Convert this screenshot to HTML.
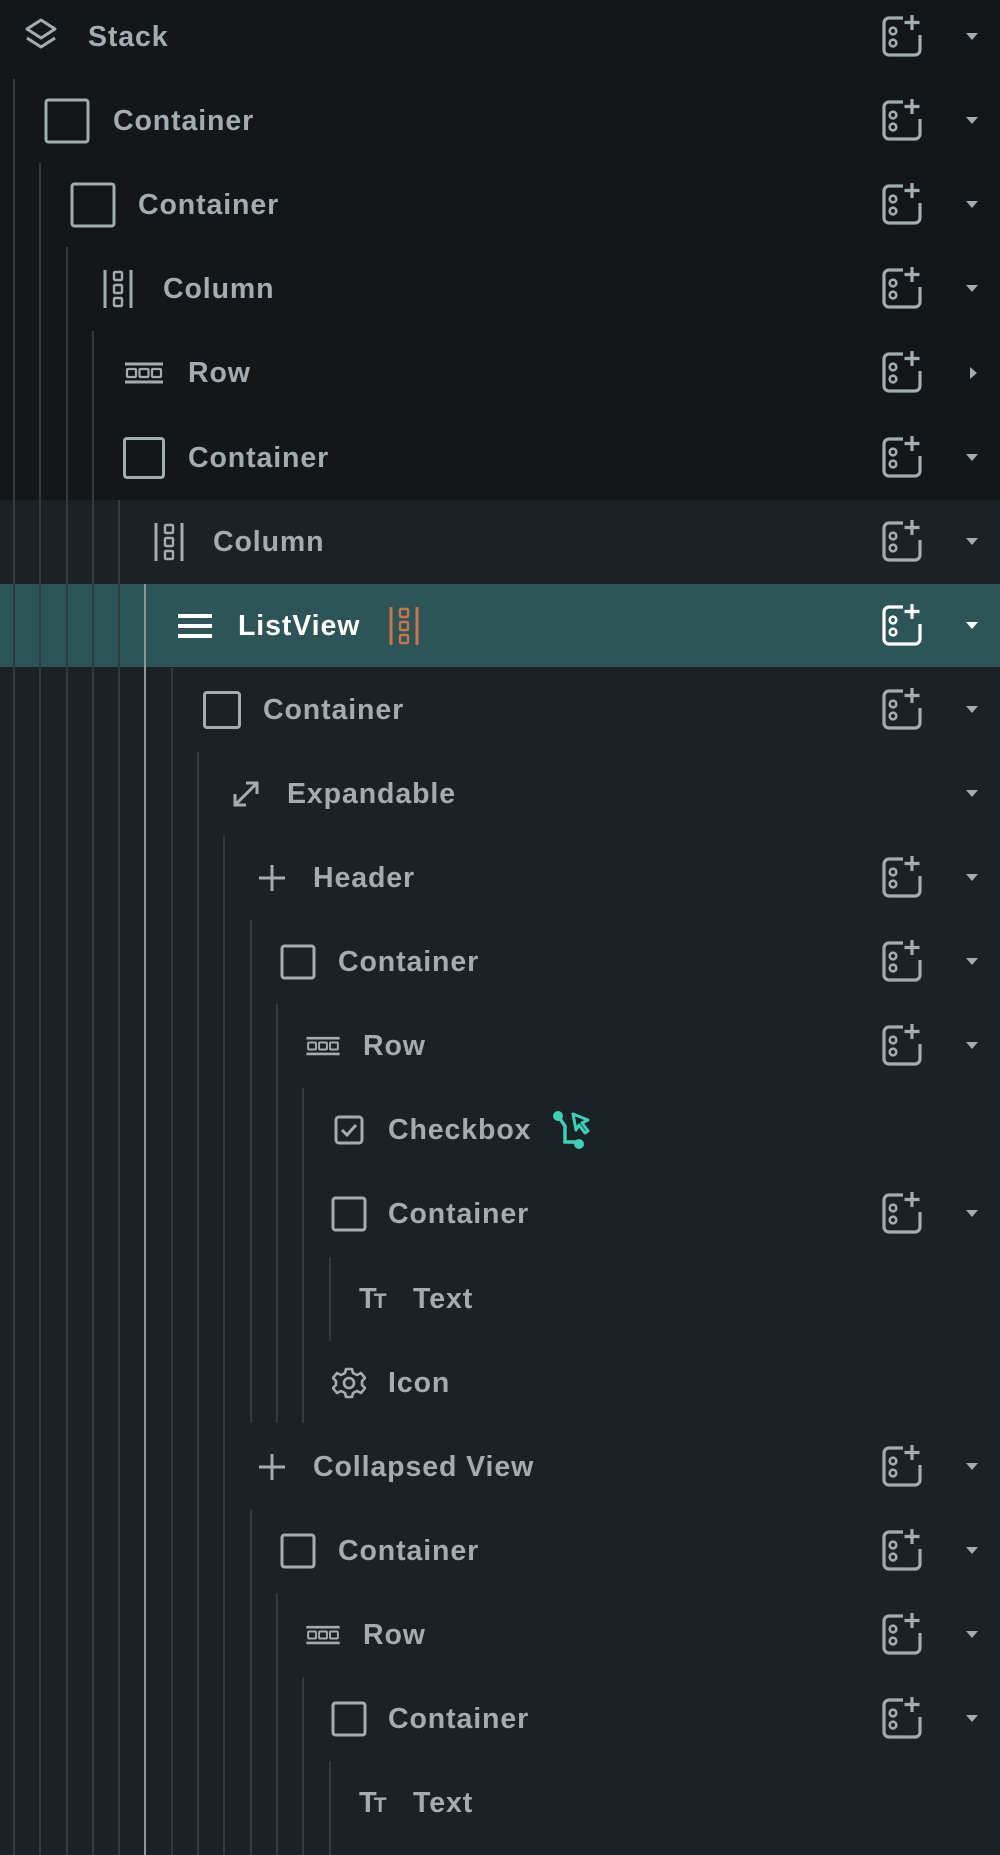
<!DOCTYPE html>
<html><head><meta charset="utf-8"><style>
*{margin:0;padding:0;box-sizing:border-box}
body{width:1000px;height:1855px;overflow:hidden;background:#1b2226;position:relative;font-family:"Liberation Sans",sans-serif}
.top{position:absolute;left:0;top:0;width:1000px;height:500px;background:#131719}
.hl{position:absolute;left:0;top:584px;width:1000px;height:83px;background:#2d5456}
.ln{position:absolute;width:2px;background:#323b3f}
.r{position:absolute;left:0;width:1000px;height:84px}
.t{position:absolute;top:0;line-height:84px;font-size:28.5px;font-weight:bold;color:#a3acb0;letter-spacing:0.9px;white-space:nowrap}
.i{position:absolute;top:50%;transform:translate(-50%,-50%)}
.a{position:absolute;left:880px;top:19px}
.ar{position:absolute;left:966px;top:38px}
</style></head><body>
<div class="top"></div>
<div class="hl"></div>
<svg width="0" height="0" style="position:absolute"><defs>
<g id="add"><path d="M23 4H9a5 5 0 0 0-5 5v27a5 5 0 0 0 5 5h26a5 5 0 0 0 5-5V21" fill="none" stroke="currentColor" stroke-width="3.2"/><path d="M32 1v15M24.5 8.5h15" stroke="currentColor" stroke-width="3.2"/><circle cx="13" cy="17" r="3.3" fill="none" stroke="currentColor" stroke-width="2.6"/><circle cx="13" cy="29" r="3.3" fill="none" stroke="currentColor" stroke-width="2.6"/></g>
<g id="arr"><path d="M0 0h12L6 7z" fill="currentColor"/></g>
<g id="col"><path d="M3 1v38M29 1v38" stroke="currentColor" stroke-width="3"/><rect x="12" y="3" width="8" height="8" rx="1" fill="none" stroke="currentColor" stroke-width="2.4"/><rect x="12" y="16" width="8" height="8" rx="1" fill="none" stroke="currentColor" stroke-width="2.4"/><rect x="12" y="29" width="8" height="8" rx="1" fill="none" stroke="currentColor" stroke-width="2.4"/></g>
<g id="row"><path d="M1 3h38M1 21h38" stroke="currentColor" stroke-width="3"/><rect x="3" y="8" width="9" height="8" rx="1" fill="none" stroke="currentColor" stroke-width="2.2"/><rect x="15.5" y="8" width="9" height="8" rx="1" fill="none" stroke="currentColor" stroke-width="2.2"/><rect x="28" y="8" width="9" height="8" rx="1" fill="none" stroke="currentColor" stroke-width="2.2"/></g>
</defs></svg>

<div class="ln" style="left:13px;top:79px;height:1776px"></div>
<div class="ln" style="left:39px;top:163px;height:1692px"></div>
<div class="ln" style="left:66px;top:247px;height:1608px"></div>
<div class="ln" style="left:92px;top:331px;height:1524px"></div>
<div class="ln" style="left:118px;top:500px;height:1355px"></div>
<div class="ln" style="left:144px;top:584px;height:1271px;background:#8c979b"></div>
<div class="ln" style="left:171px;top:668px;height:1187px"></div>
<div class="ln" style="left:197px;top:752px;height:1103px"></div>
<div class="ln" style="left:223px;top:836px;height:1019px"></div>
<div class="ln" style="left:250px;top:920px;height:503px"></div>
<div class="ln" style="left:250px;top:1509px;height:346px"></div>
<div class="ln" style="left:276px;top:1004px;height:419px"></div>
<div class="ln" style="left:276px;top:1593px;height:262px"></div>
<div class="ln" style="left:302px;top:1088px;height:335px"></div>
<div class="ln" style="left:302px;top:1677px;height:178px"></div>
<div class="ln" style="left:329px;top:1257px;height:84px"></div>
<div class="ln" style="left:329px;top:1761px;height:94px"></div>

<div class="r" style="top:-5px;color:#a3acb0">
<svg class="i" style="left:41px" width="40" height="42" viewBox="0 0 40 42"><path d="M20 4L34 13L20 22L6 13Z" fill="none" stroke="currentColor" stroke-width="3" stroke-linejoin="round"/><path d="M6 22L20 31L34 22" fill="none" stroke="currentColor" stroke-width="3" stroke-linejoin="round"/></svg>
<div class="t" style="left:88px">Stack</div>
<svg class="a" width="44" height="44"><use href="#add"/></svg><svg class="ar" width="12" height="8"><use href="#arr"/></svg></div>

<div class="r" style="top:79px;color:#a3acb0">
<div class="i" style="left:67px;width:45px;height:45px;border:3px solid #a3acb0;border-radius:4px"></div>
<div class="t" style="left:113px">Container</div>
<svg class="a" width="44" height="44"><use href="#add"/></svg><svg class="ar" width="12" height="8"><use href="#arr"/></svg></div>

<div class="r" style="top:163px;color:#a3acb0">
<div class="i" style="left:93px;width:45px;height:45px;border:3px solid #a3acb0;border-radius:4px"></div>
<div class="t" style="left:138px">Container</div>
<svg class="a" width="44" height="44"><use href="#add"/></svg><svg class="ar" width="12" height="8"><use href="#arr"/></svg></div>

<div class="r" style="top:247px;color:#a3acb0">
<svg class="i" style="left:118px" width="32" height="40"><use href="#col"/></svg>
<div class="t" style="left:163px">Column</div>
<svg class="a" width="44" height="44"><use href="#add"/></svg><svg class="ar" width="12" height="8"><use href="#arr"/></svg></div>

<div class="r" style="top:331px;color:#a3acb0">
<svg class="i" style="left:144px" width="40" height="24"><use href="#row"/></svg>
<div class="t" style="left:188px">Row</div>
<svg class="a" width="44" height="44"><use href="#add"/></svg><svg class="ar" style="left:970px;top:36px" width="8" height="12"><path d="M0 0v12l7-6z" fill="currentColor"/></svg></div>

<div class="r" style="top:416px;color:#a3acb0">
<div class="i" style="left:144px;width:42px;height:42px;border:3px solid #a3acb0;border-radius:4px"></div>
<div class="t" style="left:188px">Container</div>
<svg class="a" width="44" height="44"><use href="#add"/></svg><svg class="ar" width="12" height="8"><use href="#arr"/></svg></div>

<div class="r" style="top:500px;color:#a3acb0">
<svg class="i" style="left:169px" width="32" height="40"><use href="#col"/></svg>
<div class="t" style="left:213px">Column</div>
<svg class="a" width="44" height="44"><use href="#add"/></svg><svg class="ar" width="12" height="8"><use href="#arr"/></svg></div>

<div class="r" style="top:584px;color:#ffffff">
<svg class="i" style="left:195px" width="36" height="26"><path d="M1 3h34M1 13h34M1 23h34" stroke="#fff" stroke-width="4"/></svg>
<div class="t" style="left:238px;color:#fff">ListView</div>
<svg class="i" style="left:404px;color:#c8744a" width="32" height="40"><use href="#col"/></svg>
<svg class="a" width="44" height="44"><use href="#add"/></svg><svg class="ar" width="12" height="8"><use href="#arr"/></svg></div>

<div class="r" style="top:668px;color:#a3acb0">
<div class="i" style="left:222px;width:38px;height:38px;border:3px solid #a3acb0;border-radius:4px"></div>
<div class="t" style="left:263px">Container</div>
<svg class="a" width="44" height="44"><use href="#add"/></svg><svg class="ar" width="12" height="8"><use href="#arr"/></svg></div>

<div class="r" style="top:752px;color:#a3acb0">
<svg class="i" style="left:246px" width="32" height="32"><path d="M5 27L27 5M16 5h11v11M5 16v11h11" fill="none" stroke="currentColor" stroke-width="3"/></svg>
<div class="t" style="left:287px">Expandable</div>
<svg class="ar" width="12" height="8"><use href="#arr"/></svg></div>

<div class="r" style="top:836px;color:#a3acb0">
<svg class="i" style="left:272px" width="28" height="28"><path d="M14 1v26M1 14h26" stroke="currentColor" stroke-width="3"/></svg>
<div class="t" style="left:313px">Header</div>
<svg class="a" width="44" height="44"><use href="#add"/></svg><svg class="ar" width="12" height="8"><use href="#arr"/></svg></div>

<div class="r" style="top:920px;color:#a3acb0">
<div class="i" style="left:298px;width:35px;height:35px;border:3px solid #a3acb0;border-radius:4px"></div>
<div class="t" style="left:338px">Container</div>
<svg class="a" width="44" height="44"><use href="#add"/></svg><svg class="ar" width="12" height="8"><use href="#arr"/></svg></div>

<div class="r" style="top:1004px;color:#a3acb0">
<svg class="i" style="left:323px" width="35" height="22" viewBox="0 0 40 24"><use href="#row"/></svg>
<div class="t" style="left:363px">Row</div>
<svg class="a" width="44" height="44"><use href="#add"/></svg><svg class="ar" width="12" height="8"><use href="#arr"/></svg></div>

<div class="r" style="top:1088px;color:#a3acb0">
<svg class="i" style="left:349px" width="30" height="30"><rect x="2" y="2" width="26" height="26" rx="3" fill="none" stroke="currentColor" stroke-width="3"/><path d="M8 15l5 5 9-10" fill="none" stroke="currentColor" stroke-width="3"/></svg>
<div class="t" style="left:388px">Checkbox</div>
<svg class="i" style="left:572px" width="42" height="44" viewBox="0 0 42 44"><circle cx="7" cy="8" r="5" fill="#3ecfb6"/><circle cx="28" cy="36" r="5" fill="#3ecfb6"/><path d="M7 8l7 10v16h14" fill="none" stroke="#3ecfb6" stroke-width="3.5"/><path d="M22 6l15 6-6 3 6 8-3 2-6-8-3 5z" fill="none" stroke="#3ecfb6" stroke-width="3" stroke-linejoin="round"/></svg>
</div>

<div class="r" style="top:1172px;color:#a3acb0">
<div class="i" style="left:349px;width:35px;height:35px;border:3px solid #a3acb0;border-radius:4px"></div>
<div class="t" style="left:388px">Container</div>
<svg class="a" width="44" height="44"><use href="#add"/></svg><svg class="ar" width="12" height="8"><use href="#arr"/></svg></div>

<div class="r" style="top:1257px;color:#a3acb0">
<div class="t" style="left:359px;font-size:29px;letter-spacing:-3px">T<span style="font-size:21px">T</span></div>
<div class="t" style="left:413px">Text</div></div>

<div class="r" style="top:1341px;color:#a3acb0">
<svg class="i" style="left:349px" width="34" height="34" viewBox="0 0 34 34"><path d="M14 3h6l1 4 4 2 4-2 4 5-3 3v4l3 3-4 5-4-2-4 2-1 4h-6l-1-4-4-2-4 2-4-5 3-3v-4L1 12l4-5 4 2 4-2z" fill="none" stroke="currentColor" stroke-width="2.6" stroke-linejoin="round"/><circle cx="17" cy="17" r="5" fill="none" stroke="currentColor" stroke-width="2.6"/></svg>
<div class="t" style="left:388px">Icon</div></div>

<div class="r" style="top:1425px;color:#a3acb0">
<svg class="i" style="left:272px" width="28" height="28"><path d="M14 1v26M1 14h26" stroke="currentColor" stroke-width="3"/></svg>
<div class="t" style="left:313px">Collapsed View</div>
<svg class="a" width="44" height="44"><use href="#add"/></svg><svg class="ar" width="12" height="8"><use href="#arr"/></svg></div>

<div class="r" style="top:1509px;color:#a3acb0">
<div class="i" style="left:298px;width:35px;height:35px;border:3px solid #a3acb0;border-radius:4px"></div>
<div class="t" style="left:338px">Container</div>
<svg class="a" width="44" height="44"><use href="#add"/></svg><svg class="ar" width="12" height="8"><use href="#arr"/></svg></div>

<div class="r" style="top:1593px;color:#a3acb0">
<svg class="i" style="left:323px" width="35" height="22" viewBox="0 0 40 24"><use href="#row"/></svg>
<div class="t" style="left:363px">Row</div>
<svg class="a" width="44" height="44"><use href="#add"/></svg><svg class="ar" width="12" height="8"><use href="#arr"/></svg></div>

<div class="r" style="top:1677px;color:#a3acb0">
<div class="i" style="left:349px;width:35px;height:35px;border:3px solid #a3acb0;border-radius:4px"></div>
<div class="t" style="left:388px">Container</div>
<svg class="a" width="44" height="44"><use href="#add"/></svg><svg class="ar" width="12" height="8"><use href="#arr"/></svg></div>

<div class="r" style="top:1761px;color:#a3acb0">
<div class="t" style="left:359px;font-size:29px;letter-spacing:-3px">T<span style="font-size:21px">T</span></div>
<div class="t" style="left:413px">Text</div></div>
</body></html>
